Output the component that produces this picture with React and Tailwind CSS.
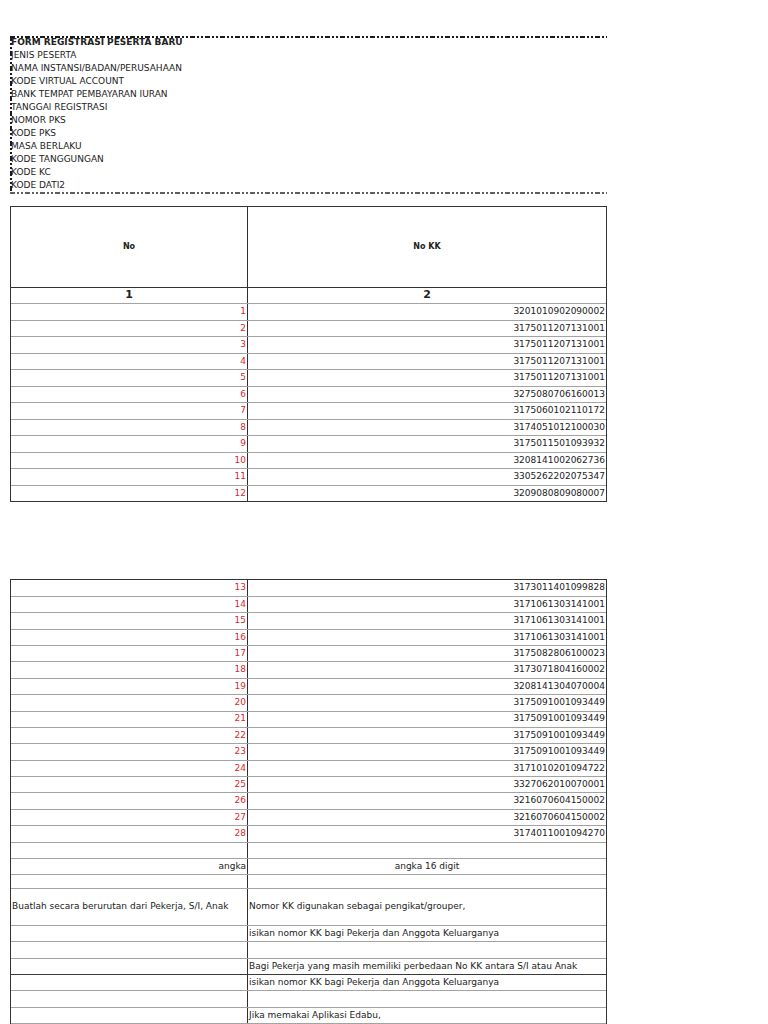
const headerLines = [
  "JENIS PESERTA",
  "NAMA INSTANSI/BADAN/PERUSAHAAN",
  "KODE VIRTUAL ACCOUNT",
  "BANK TEMPAT PEMBAYARAN IURAN",
  "TANGGAl REGISTRASI",
  "NOMOR PKS",
  "KODE PKS",
  "MASA BERLAKU",
  "KODE TANGGUNGAN",
  "KODE KC",
  "KODE DATI2",
];

const kkFirst = [
  "3201010902090002",
  "3175011207131001",
  "3175011207131001",
  "3175011207131001",
  "3175011207131001",
  "3275080706160013",
  "3175060102110172",
  "3174051012100030",
  "3175011501093932",
  "3208141002062736",
  "3305262202075347",
  "3209080809080007",
];

const kkSecond = [
  "3173011401099828",
  "3171061303141001",
  "3171061303141001",
  "3171061303141001",
  "3175082806100023",
  "3173071804160002",
  "3208141304070004",
  "3175091001093449",
  "3175091001093449",
  "3175091001093449",
  "3175091001093449",
  "3171010201094722",
  "3327062010070001",
  "3216070604150002",
  "3216070604150002",
  "3174011001094270",
];

const dashH =
  "bg-[repeating-linear-gradient(90deg,#1a1a1a_0_5px,transparent_5px_7px,#1a1a1a_7px_9px,transparent_9px_11px,#1a1a1a_11px_13px,transparent_13px_15px)]";
const dashV =
  "bg-[repeating-linear-gradient(180deg,#1a1a1a_0_5px,transparent_5px_7px,#1a1a1a_7px_9px,transparent_9px_11px,#1a1a1a_11px_13px,transparent_13px_15px)]";

function Row({ left, right, h = "h-[16.4px]", leftCls = "", rightCls = "", dark = false }) {
  return (
    <div className={`flex ${h} border-b ${dark ? "border-[#3a3a3a]" : "border-[#a3a3a3]"}`}>
      <div className={`w-[237px] shrink-0 flex items-center border-r border-[#2e2e2e] px-[1px] ${leftCls}`}>
        {left}
      </div>
      <div className={`flex-1 flex items-center px-[1px] ${rightCls}`}>{right}</div>
    </div>
  );
}

function NumRow({ n, kk, h }) {
  return (
    <Row
      left={<span className="text-[#e0262b]">{n}</span>}
      right={kk}
      leftCls="justify-end"
      rightCls="justify-end"
      h={h}
    />
  );
}

export default function App() {
  return (
    <div className="min-h-[1024px] bg-white text-[#222] font-['DejaVu_Sans',sans-serif] text-[9px] overflow-hidden">
      <div className="pl-[10px] pt-[36px] w-[607px]">
        {/* registration header block */}
        <div className={`h-[2px] ${dashH}`} />
        <div className="flex -mt-[2px]">
          <div className={`w-[2px] shrink-0 ${dashV}`} />
          <div className="-ml-[1px] leading-[13px]">
            <div className="font-bold">FORM REGISTRASI PESERTA BARU</div>
            {headerLines.map((l) => (
              <div key={l}>{l}</div>
            ))}
          </div>
        </div>
        <div className={`h-[2px] opacity-70 ${dashH}`} />

        {/* first table */}
        <div className="mt-[12px] border border-[#333] border-b-0">
          <div className="flex h-[81px] border-b border-[#333]">
            <div className="w-[237px] shrink-0 flex items-center justify-center border-r border-[#2e2e2e] font-bold text-[8px]">
              No
            </div>
            <div className="flex-1 flex items-center justify-center font-bold text-[8px]">No KK</div>
          </div>
          <Row
            left="1"
            right="2"
            leftCls="justify-center font-bold text-[11px]"
            rightCls="justify-center font-bold text-[11px]"
          />
          {kkFirst.map((kk, i) => (
            <NumRow key={i} n={i + 1} kk={kk} h="h-[16.5px]" />
          ))}
        </div>
        <div className="h-[1px] bg-[#333] -mt-[1px]" />

        {/* second table */}
        <div className="mt-[77px] border border-[#333] border-b-0">
          {kkSecond.map((kk, i) => (
            <NumRow key={i} n={i + 13} kk={kk} />
          ))}
          <Row left="" right="" />
          <Row left="angka" right="angka 16 digit" leftCls="justify-end" rightCls="justify-center" />
          <Row left="" right="" h="h-[13.5px]" />
          <Row
            h="h-[37px]"
            left="Buatlah secara berurutan dari Pekerja, S/I, Anak"
            right="Nomor KK digunakan sebagai pengikat/grouper,"
          />
          <Row left="" right="isikan nomor KK bagi Pekerja dan Anggota Keluarganya" />
          <Row left="" right="" />
          <Row left="" right="Bagi Pekerja yang masih memiliki perbedaan No KK antara S/I atau Anak" dark />
          <Row left="" right="isikan nomor KK bagi Pekerja dan Anggota Keluarganya" />
          <Row left="" right="" />
          <Row left="" right="Jika memakai Aplikasi Edabu," />
        </div>
      </div>
    </div>
  );
}
